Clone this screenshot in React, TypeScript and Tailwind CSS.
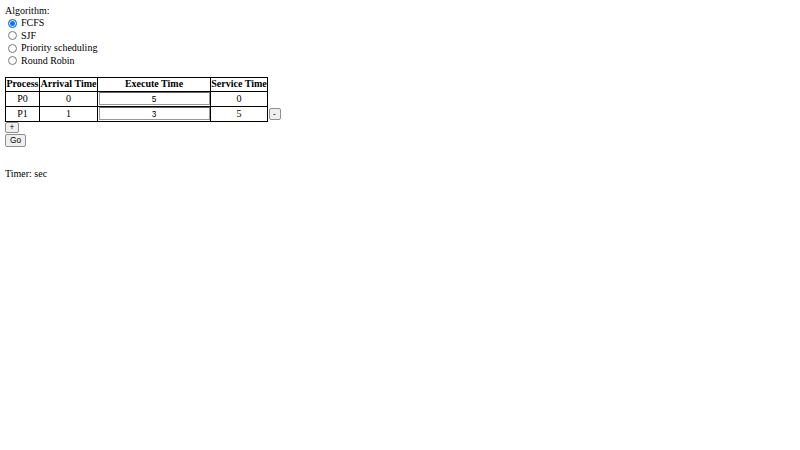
import React from "react";

export default function App() {
  const rows = [
    { p: "P0", a: "0", e: "5", s: "0" },
    { p: "P1", a: "1", e: "3", s: "5" },
  ];
  return (
    <div className="p-[5px] font-['Liberation_Serif',serif] text-[10px] leading-[11.5px] text-black bg-white min-h-[450px]">
      <div>Algorithm:</div>
      {["FCFS", "SJF", "Priority scheduling", "Round Robin"].map((l, i) => (
        <label key={l} className="flex items-center h-[12.5px]">
          <input
            type="radio"
            name="algo"
            defaultChecked={i === 0}
            className="appearance-none w-[9px] h-[9px] m-0 ml-[3px] mr-[4px] mt-[1px] rounded-full border border-[#7a7a7a] bg-white checked:border-[#0075ff] checked:bg-[#0075ff] checked:shadow-[inset_0_0_0_1px_#ffffff]"
          />
          <span>{l}</span>
        </label>
      ))}
      <div className="h-[10px]" />
      <div className="flex items-end">
        <table className="border-collapse table-fixed w-[263px]">
          <colgroup>
            <col className="w-[34px]" />
            <col className="w-[58px]" />
            <col className="w-[113px]" />
            <col className="w-[57px]" />
          </colgroup>
          <thead>
            <tr className="h-[14px]">
              {["Process", "Arrival Time", "Execute Time", "Service Time"].map((h) => (
                <th key={h} className="border border-black p-0 font-bold text-center whitespace-nowrap">
                  {h}
                </th>
              ))}
            </tr>
          </thead>
          <tbody>
            {rows.map((r) => (
              <tr key={r.p} className="h-[15px]">
                <td className="border border-black p-0 text-center">{r.p}</td>
                <td className="border border-black p-0 text-center">{r.a}</td>
                <td className="border border-black p-0 text-center">
                  <input
                    type="text"
                    defaultValue={r.e}
                    className="block w-[111px] h-[13px] mx-auto border-[1.5px] border-[#9a9a9a] border-t-[#666] bg-white text-center font-['Liberation_Sans',sans-serif] text-[8.3px] leading-[10px] p-0 outline-none"
                  />
                </td>
                <td className="border border-black p-0 text-center">{r.s}</td>
              </tr>
            ))}
          </tbody>
        </table>
        <button className="mb-[2px] ml-[0.5px] w-[12px] h-[12px] bg-[#efefef] border border-[#8f8f8f] rounded-[2px] font-['Liberation_Sans',sans-serif] text-[8.3px] leading-[10px] p-0 flex items-center justify-center">
          -
        </button>
      </div>
      <div className="flex flex-col items-start gap-[1px] mt-[0.5px]">
        <button className="w-[14px] h-[11px] bg-[#efefef] border border-[#8f8f8f] rounded-[2px] font-['Liberation_Sans',sans-serif] text-[8.3px] leading-[9px] p-0 flex items-center justify-center">
          +
        </button>
        <button className="w-[21px] h-[13px] bg-[#efefef] border border-[#8f8f8f] rounded-[2px] font-['Liberation_Sans',sans-serif] text-[8.3px] leading-[11px] p-0 flex items-center justify-center">
          Go
        </button>
      </div>
      <div className="mt-[21px]">Timer: sec</div>
    </div>
  );
}
